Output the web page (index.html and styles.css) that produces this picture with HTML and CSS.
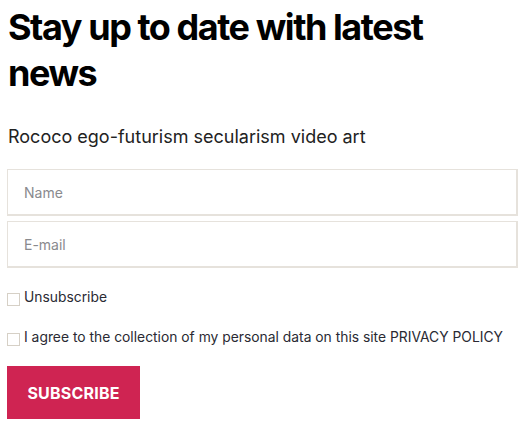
FILE: index.html
```html
<!DOCTYPE html>
<html lang="en">
<head>
<meta charset="utf-8">
<title>Newsletter</title>
<link rel="stylesheet" href="styles.css">
</head>
<body>
<section class="newsletter">
  <h2 class="title">Stay up to date with latest news</h2>
  <p class="lead">Rococo ego-futurism secularism video art</p>
  <form class="form">
    <div class="fields">
      <input class="field" type="text" placeholder="Name">
      <input class="field" type="email" placeholder="E-mail">
    </div>
    <label class="check check-first"><span class="box"></span>Unsubscribe</label>
    <label class="check"><span class="box"></span>I agree to the collection of my personal data on this site PRIVACY POLICY</label>
    <button class="btn" type="button">SUBSCRIBE</button>
  </form>
</section>
</body>
</html>
```

FILE: styles.css
```css
* { box-sizing: border-box; }
html, body { margin: 0; padding: 0; background: #fff; }
body {
  font-family: Inter, "Noto Sans", sans-serif;
  color: #111;
  padding: 0 12px 0 7px;
}
.newsletter { display: flex; flex-direction: column; }
.title {
  margin: 4px 0 0 1px;
  font-size: 36px;
  line-height: 46px;
  font-weight: 700;
  letter-spacing: -1.45px;
  color: #000;
  max-width: 470px;
}
.lead {
  margin: 28px 0 0 1px;
  font-size: 18px;
  line-height: 26px;
  color: #222;
}
.form { display: flex; flex-direction: column; margin-top: 19px; }
.fields { display: flex; flex-direction: column; gap: 5px; }
.field {
  height: 47px;
  border: 1px solid #e6e2dc;
  border-width: 1px 2px 2px 1px;
  background: #fff;
  padding: 0 16px;
  font-family: Inter, sans-serif;
  font-size: 14px;
  color: #333;
  outline: none;
}
.field::placeholder { color: #8a8a8e; }
.check {
  display: flex;
  align-items: flex-start;
  gap: 4px;
  font-size: 13.85px;
  line-height: 20px;
  color: #2a2a33;
  margin-top: 20px;
}
.check-first { margin-top: 19px; }
.box {
  width: 13px;
  height: 13px;
  border: 1px solid #d6d0c6;
  background: #fff;
  flex: none;
  margin-top: 6px;
}
.btn {
  margin-top: 19px;
  align-self: flex-start;
  width: 133px;
  height: 53px;
  border: none;
  background: #cf2452;
  color: #fff;
  font-family: Inter, sans-serif;
  font-weight: 700;
  font-size: 16px;
  letter-spacing: 0.2px;
}
```
